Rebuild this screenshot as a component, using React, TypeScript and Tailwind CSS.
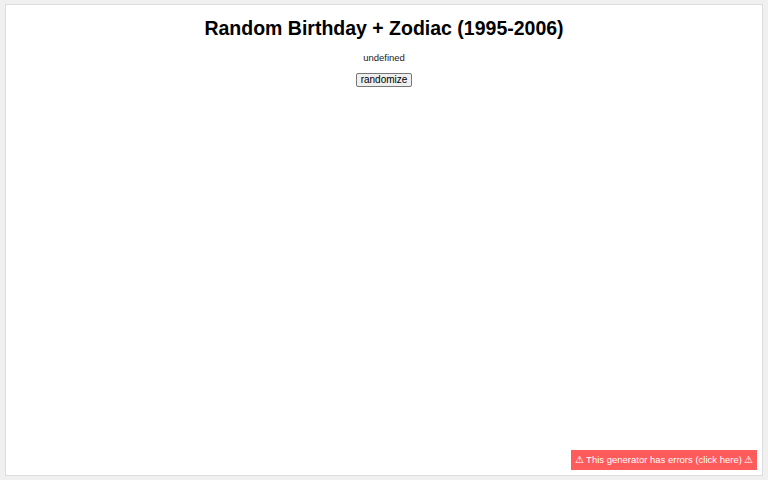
export default function App() {
  return (
    <div className="h-[480px] w-[768px] bg-[#f0f0f0] p-[4px_5px_4px_5px] font-['Liberation_Sans',Arial,sans-serif] text-black">
      <div className="relative h-full w-full border border-[#dddddd] bg-white">
        <div className="flex flex-col items-center">
          <h1 className="mt-[11px] text-[19.5px] font-bold leading-[24px]">
            Random Birthday + Zodiac (1995-2006)
          </h1>
          <div className="mt-[12px] text-[9.5px] leading-[12px] text-[#222]">undefined</div>
          <button className="mt-[9px] rounded-[2px] border border-[#767676] bg-[#efefef] px-[4px] text-[10px] leading-[12px]">
            randomize
          </button>
        </div>
        <div className="absolute bottom-[5px] right-[5px] bg-[#ff5b5b] px-[3.5px] py-[4px] text-[9.5px] leading-[12px] text-white">
          ⚠ This generator has errors (click here) ⚠
        </div>
      </div>
    </div>
  );
}
